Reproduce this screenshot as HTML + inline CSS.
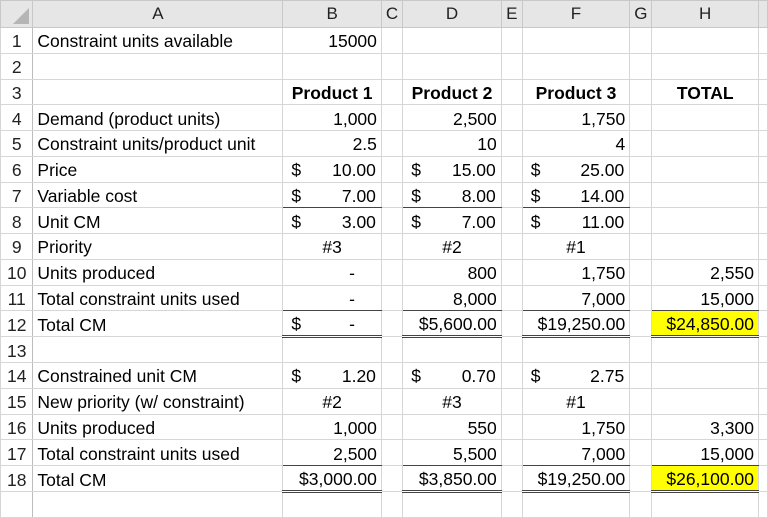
<!DOCTYPE html>
<html><head><meta charset="utf-8"><style>
body{margin:0;background:#fff;width:768px;height:498px;overflow:hidden;font-family:"Liberation Sans",sans-serif;font-size:17.5px;color:#000}
table{border-collapse:collapse;table-layout:fixed;position:absolute;left:0;top:0}
td{border:1px solid #d6d6d6;padding:2px 4px 0 4px;height:25.75px;white-space:nowrap;overflow:hidden;box-sizing:border-box;line-height:22px}
tr.h td{background:#e6e6e6;height:27px;text-align:center;color:#222;border-color:#c8c8c8;font-size:17px;padding-top:0}
td.rn{text-align:center;padding:2px 0 0 0;color:#222;border-right-color:#bdbdbd}
.r{text-align:right}.c{text-align:center}.b{font-weight:bold}
.acc{padding-left:8px;padding-right:5px}
.acc span{float:left}
.acc b{font-weight:normal;float:right}
.pr{padding-right:4px;text-align:right}
.ub{border-bottom:1px solid #444}
.db{border-bottom:3px double #444}
.y{background:#ffff00}
</style></head><body>
<table>
<colgroup><col style="width:33px"><col style="width:251px"><col style="width:99px"><col style="width:21px"><col style="width:99px"><col style="width:21px"><col style="width:108px"><col style="width:21px"><col style="width:107px"><col style="width:8px"></colgroup>
<tr class="h"><td style="position:relative"><div style="position:absolute;right:3px;bottom:3px;width:0;height:0;border-left:16px solid transparent;border-bottom:16px solid #b5b5b5"></div></td><td>A</td><td>B</td><td>C</td><td>D</td><td>E</td><td>F</td><td>G</td><td>H</td><td></td></tr>
<tr><td class="rn">1</td><td>Constraint units available</td><td class="pr">15000</td><td></td><td></td><td></td><td></td><td></td><td></td><td></td></tr>
<tr><td class="rn">2</td><td></td><td></td><td></td><td></td><td></td><td></td><td></td><td></td><td></td></tr>
<tr><td class="rn">3</td><td></td><td class="c b">Product 1</td><td></td><td class="c b">Product 2</td><td></td><td class="c b">Product 3</td><td></td><td class="c b">TOTAL</td><td></td></tr>
<tr><td class="rn">4</td><td>Demand (product units)</td><td class="pr">1,000</td><td></td><td class="pr">2,500</td><td></td><td class="pr">1,750</td><td></td><td></td><td></td></tr>
<tr><td class="rn">5</td><td>Constraint units/product unit</td><td class="pr">2.5</td><td></td><td class="pr">10</td><td></td><td class="pr">4</td><td></td><td></td><td></td></tr>
<tr><td class="rn">6</td><td>Price</td><td class="acc"><span>$</span><b>10.00</b></td><td></td><td class="acc"><span>$</span><b>15.00</b></td><td></td><td class="acc"><span>$</span><b>25.00</b></td><td></td><td></td><td></td></tr>
<tr><td class="rn">7</td><td>Variable cost</td><td class="acc ub"><span>$</span><b>7.00</b></td><td></td><td class="acc ub"><span>$</span><b>8.00</b></td><td></td><td class="acc ub"><span>$</span><b>14.00</b></td><td></td><td></td><td></td></tr>
<tr><td class="rn">8</td><td>Unit CM</td><td class="acc"><span>$</span><b>3.00</b></td><td></td><td class="acc"><span>$</span><b>7.00</b></td><td></td><td class="acc"><span>$</span><b>11.00</b></td><td></td><td></td><td></td></tr>
<tr><td class="rn">9</td><td>Priority</td><td class="c">#3</td><td></td><td class="c">#2</td><td></td><td class="c">#1</td><td></td><td></td><td></td></tr>
<tr><td class="rn">10</td><td>Units produced</td><td class="pr" style="padding-right:26px">-</td><td></td><td class="pr">800</td><td></td><td class="pr">1,750</td><td></td><td class="pr">2,550</td><td></td></tr>
<tr><td class="rn">11</td><td>Total constraint units used</td><td class="pr ub" style="padding-right:26px">-</td><td></td><td class="pr ub">8,000</td><td></td><td class="pr ub">7,000</td><td></td><td class="pr ub">15,000</td><td></td></tr>
<tr><td class="rn">12</td><td>Total CM</td><td class="acc db"><span>$</span><b style="padding-right:21px">-</b></td><td></td><td class="pr db">$5,600.00</td><td></td><td class="pr db">$19,250.00</td><td></td><td class="pr db y">$24,850.00</td><td></td></tr>
<tr><td class="rn">13</td><td></td><td></td><td></td><td></td><td></td><td></td><td></td><td></td><td></td></tr>
<tr><td class="rn">14</td><td>Constrained unit CM</td><td class="acc"><span>$</span><b>1.20</b></td><td></td><td class="acc"><span>$</span><b>0.70</b></td><td></td><td class="acc"><span>$</span><b>2.75</b></td><td></td><td></td><td></td></tr>
<tr><td class="rn">15</td><td>New priority (w/ constraint)</td><td class="c">#2</td><td></td><td class="c">#3</td><td></td><td class="c">#1</td><td></td><td></td><td></td></tr>
<tr><td class="rn">16</td><td>Units produced</td><td class="pr">1,000</td><td></td><td class="pr">550</td><td></td><td class="pr">1,750</td><td></td><td class="pr">3,300</td><td></td></tr>
<tr><td class="rn">17</td><td>Total constraint units used</td><td class="pr ub">2,500</td><td></td><td class="pr ub">5,500</td><td></td><td class="pr ub">7,000</td><td></td><td class="pr ub">15,000</td><td></td></tr>
<tr><td class="rn">18</td><td>Total CM</td><td class="pr db">$3,000.00</td><td></td><td class="pr db">$3,850.00</td><td></td><td class="pr db">$19,250.00</td><td></td><td class="pr db y">$26,100.00</td><td></td></tr>
<tr><td class="rn"></td><td></td><td></td><td></td><td></td><td></td><td></td><td></td><td></td><td></td></tr>
</table>
</body></html>
